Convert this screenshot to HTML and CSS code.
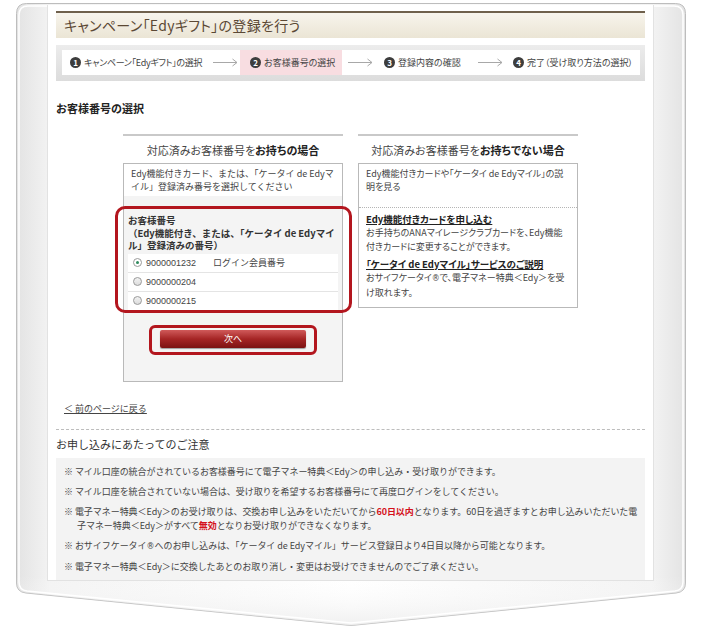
FILE: index.html
```html
<!DOCTYPE html>
<html lang="ja">
  <head>
    <meta charset="UTF-8" />
    <meta name="viewport" content="width=device-width, initial-scale=1.0" />
    <title>キャンペーン「Edyギフト」の登録を行う</title>
    <link rel="stylesheet" href="styles.css">
  </head>
  <body>
    <div class="frame">
      <!-- 外枠（下の矢印型） -->
      <svg class="frame-bg" width="670" height="624" viewBox="0 0 670 624">
        <defs>
          <linearGradient id="side" x1="0" y1="0" x2="1" y2="0">
            <stop offset="0" stop-color="#e3e3e3" />
            <stop offset="0.05" stop-color="#f3f3f3" />
            <stop offset="0.5" stop-color="#ffffff" />
            <stop offset="0.95" stop-color="#f3f3f3" />
            <stop offset="1" stop-color="#e3e3e3" />
          </linearGradient>
          <linearGradient id="tip" x1="0" y1="0" x2="0" y2="1">
            <stop offset="0" stop-color="#ffffff" stop-opacity="0" />
            <stop offset="0.92" stop-color="#ffffff" stop-opacity="0" />
            <stop offset="1" stop-color="#e9e9e9" stop-opacity="0.7" />
          </linearGradient>
        </defs>
        <path d="M10.5 0.5 H659.5 Q669.5 0.5 669.5 10.5 V580 Q669.5 589 660 590 L335 622.5 L10 590 Q0.5 589 0.5 580 V10.5 Q0.5 0.5 10.5 0.5 Z"
              fill="url(#side)" stroke="#bdbdbd" />
        <path d="M10.5 0.5 H659.5 Q669.5 0.5 669.5 10.5 V580 Q669.5 589 660 590 L335 622.5 L10 590 Q0.5 589 0.5 580 V10.5 Q0.5 0.5 10.5 0.5 Z"
              fill="url(#tip)" stroke="none" />
        <path d="M12 3 H658 Q667 3 667 12 V579 Q667 587 659 588 L335 620 L11 588 Q3 587 3 579 V12 Q3 3 12 3 Z"
              fill="none" stroke="#ffffff" stroke-width="1.5" />
      </svg>

      <div class="panel">
        <h1 class="page-title">キャンペーン「Edyギフト」の登録を行う</h1>

        <!-- ステップ表示 -->
        <div class="steps">
          <div class="steps-inner">
            <div class="step step-1"><span class="num">1</span>キャンペーン「Edyギフト」の選択</div>
            <svg class="arrow" width="25" height="9" viewBox="0 0 25 9"><path d="M0 4.5 H24 M19.5 1 L24 4.5 L19.5 8" fill="none" stroke="#a8a8a8" /></svg>
            <div class="step step-2 current"><span class="num">2</span>お客様番号の選択</div>
            <svg class="arrow arrow-2" width="25" height="9" viewBox="0 0 25 9"><path d="M0 4.5 H24 M19.5 1 L24 4.5 L19.5 8" fill="none" stroke="#a8a8a8" /></svg>
            <div class="step step-3"><span class="num">3</span>登録内容の確認</div>
            <svg class="arrow" width="25" height="9" viewBox="0 0 25 9"><path d="M0 4.5 H24 M19.5 1 L24 4.5 L19.5 8" fill="none" stroke="#a8a8a8" /></svg>
            <div class="step step-4"><span class="num">4</span>完了（受け取り方法の選択）</div>
          </div>
        </div>

        <h2 class="section-title">お客様番号の選択</h2>

        <div class="columns">
          <!-- お持ちの場合 -->
          <div class="column">
            <h3 class="column-title">対応済みお客様番号を<strong>お持ちの場合</strong></h3>
            <div class="box box-select">
              <p class="box-lead">Edy機能付きカード、または、「ケータイ de Edyマイル」登録済み番号を選択してください</p>
              <div class="box-body">
                <div class="highlight">
                  <p class="select-label">お客様番号<br>（Edy機能付き、または、「ケータイ de Edyマイル」登録済みの番号）</p>
                  <ul class="number-list">
                    <li><span class="radio checked"></span>9000001232<span class="note">ログイン会員番号</span></li>
                    <li><span class="radio"></span>9000000204</li>
                    <li><span class="radio"></span>9000000215</li>
                  </ul>
                </div>
                <div class="next-wrap">
                  <button class="next-btn">次へ</button>
                </div>
              </div>
            </div>
          </div>

          <!-- お持ちでない場合 -->
          <div class="column">
            <h3 class="column-title">対応済みお客様番号を<strong>お持ちでない場合</strong></h3>
            <div class="box box-info">
              <p class="box-lead">Edy機能付きカードや「ケータイ de Edyマイル」の説明を見る</p>
              <div class="box-links">
                <a href="#" class="box-link">Edy機能付きカードを申し込む</a>
                <p>お手持ちのANAマイレージクラブカードを、Edy機能付きカードに変更することができます。</p>
                <a href="#" class="box-link">「ケータイ de Edyマイル」サービスのご説明</a>
                <p><span>おサイフケータイ</span><span class="reg">®</span><span>で、電子マネー特典＜Edy＞を受</span><br><span>け取れます。</span></p>
              </div>
            </div>
          </div>
        </div>

        <a href="#" class="back-link">＜ 前のページに戻る</a>

        <h2 class="notes-title">お申し込みにあたってのご注意</h2>
        <ul class="notes">
          <li>※ マイル口座の統合がされているお客様番号にて電子マネー特典＜Edy＞の申し込み・受け取りができます。</li>
          <li>※ マイル口座を統合されていない場合は、受け取りを希望するお客様番号にて再度ログインをしてください。</li>
          <li><span>※ 電子マネー特典＜Edy＞のお受け取りは、交換お申し込みをいただいてから</span><em>60日以内</em><span>となります。60日を過ぎますとお申し込みいただいた電</span><br><span>子マネー特典＜Edy＞がすべて</span><em>無効</em><span>となりお受け取りができなくなります。</span></li>
          <li>※ おサイフケータイ<span class="reg">®</span>へのお申し込みは、「ケータイ de Edyマイル」サービス登録日より4日目以降から可能となります。</li>
          <li>※ 電子マネー特典＜Edy＞に交換したあとのお取り消し・変更はお受けできませんのでご了承ください。</li>
        </ul>
      </div>
    </div>
  </body>
</html>
```

FILE: styles.css
```css
/* ページ全体 */
body {
  margin: 0;
  background-color: #fff;
  color: #333;
  font-family: "Noto Sans CJK JP", "Noto Sans", sans-serif;
}

h1, h2, h3, p, ul {
  margin: 0;
  padding: 0;
  font-weight: normal;
}

ul {
  list-style: none;
}

/* 外枠 */
.frame {
  position: relative;
  isolation: isolate;
  width: 670px;
  height: 624px;
  margin: 3px 0 0 16px;
  padding: 2px 32px 0 31px;
  box-sizing: border-box;
}

.frame-bg {
  position: absolute;
  left: 0;
  top: 0;
  z-index: -1;
}

/* 白いパネル */
.panel {
  display: flex;
  flex-direction: column;
  width: 607px;
  height: 576px;
  padding: 0 8px;
  box-sizing: border-box;
  background-color: #fff;
  border: 1px solid #e2e2e2;
  border-top: none;
}

/* タイトル */
.page-title {
  margin-top: 6px;
  height: 25px;
  padding-left: 8px;
  border-top: 2px solid #6f604c;
  background: linear-gradient(#f7f4ec, #ebe5d5);
  color: #5b4834;
  font-size: 14px;
  line-height: 25px;
  font-feature-settings: "palt";
  letter-spacing: 0.3px;
}

/* ステップ */
.steps {
  margin-top: 7px;
  padding: 5px 5px 6px 6px;
  background: linear-gradient(#ececec, #dcdcdc);
}

.steps-inner {
  display: flex;
  align-items: center;
  height: 25px;
  background-color: #fff;
}

.step {
  display: flex;
  align-items: center;
  height: 100%;
  box-sizing: border-box;
  font-size: 9px;
  color: #444;
  white-space: nowrap;
  font-feature-settings: "palt";
}

.step .num {
  display: inline-flex;
  justify-content: center;
  align-items: center;
  width: 11px;
  height: 11px;
  margin-right: 3px;
  border-radius: 50%;
  background-color: #3d3d3d;
  color: #fff;
  font-size: 8px;
  font-weight: bold;
  line-height: 1;
}

.step-1 {
  width: 151px;
  padding-left: 8px;
  letter-spacing: -0.3px;
}

.step-2 {
  width: 102px;
  margin-left: 2px;
  padding-left: 10px;
}

.step-3 {
  width: 105px;
  padding-left: 11px;
}

.step-4 {
  padding-left: 10px;
}

.current {
  background-color: #f8dde1;
}

.arrow {
  flex-shrink: 0;
}

.arrow-2 {
  margin-left: 6px;
}

/* 見出し */
.section-title {
  margin-top: 20px;
  font-size: 11px;
  font-weight: bold;
  line-height: 14px;
  color: #222;
}

/* 2カラム */
.columns {
  display: flex;
  justify-content: center;
  align-items: flex-start;
  gap: 15px;
  margin-top: 19px;
}

.column {
  width: 220px;
  border-top: 2px solid #c9c9c9;
}

.column-title {
  margin-top: 7px;
  font-size: 11px;
  line-height: 14px;
  text-align: center;
  color: #444;
  font-feature-settings: "palt";
}

.column-title strong {
  color: #222;
}

.box {
  margin-top: 6px;
  border: 1px solid #b9b9b9;
  background-color: #fff;
}

.box-info {
  font-feature-settings: "palt";
}

.box-lead {
  padding: 3px 7px;
  font-size: 9px;
  line-height: 13px;
  color: #444;
}

.box-body {
  padding: 10px 0 26px;
  background-color: #f4f4f4;
}

/* 赤枠 */
.highlight {
  margin: 0 -10px 0 -9px;
  padding: 5px 11px 0 10px;
  border: 3px solid #b3161e;
  border-radius: 10px;
}

.select-label {
  font-size: 9.5px;
  font-weight: bold;
  line-height: 12.5px;
  color: #333;
}

.number-list {
  margin-top: 2px;
  background-color: #fff;
}

.number-list li {
  display: flex;
  align-items: center;
  height: 18px;
  padding-left: 5px;
  border-bottom: 1px solid #e4e4e4;
  font-family: "Liberation Sans", sans-serif;
  font-size: 9px;
  color: #444;
}

.number-list li:last-child {
  border-bottom: none;
}

.radio {
  width: 7px;
  height: 7px;
  margin-right: 4px;
  border: 1px solid #9a9a9a;
  border-radius: 50%;
  background: linear-gradient(#f2f2f2, #dcdcdc);
}

.radio.checked {
  position: relative;
  background: #fff;
}

.radio.checked::after {
  content: "";
  position: absolute;
  left: 2px;
  top: 2px;
  width: 3px;
  height: 3px;
  border-radius: 50%;
  background-color: #2f8a5e;
}

.number-list .note {
  margin-left: 17px;
  font-family: "Noto Sans CJK JP", sans-serif;
}

/* 次へボタン */
.next-wrap {
  width: fit-content;
  margin: 12px auto 0;
  padding: 2px 8px 4px;
  border: 3px solid #b3161e;
  border-radius: 6px;
}

.next-btn {
  display: block;
  width: 146px;
  height: 18px;
  padding: 0;
  border: none;
  border-radius: 2px;
  background: linear-gradient(#d05a5a, #a52525 50%, #7c1212);
  box-shadow: 0 1px 1px rgba(0, 0, 0, 0.35);
  color: #fff;
  font-family: "Noto Sans CJK JP", sans-serif;
  font-size: 9px;
  cursor: pointer;
}

/* 右ボックスのリンク */
.box-links {
  margin-top: 11px;
  padding: 5px 7px 8px;
  border-top: 1px dotted #b5b5b5;
  font-size: 9px;
  color: #444;
}

.box-links p {
  line-height: 13.5px;
}

.box-link {
  display: block;
  margin-top: 5px;
  font-size: 9.5px;
  font-weight: bold;
  line-height: 13px;
  color: #222;
}

.box-link:first-child {
  margin-top: 0;
}

.reg {
  font-family: "DejaVu Sans", sans-serif;
  font-size: 8px;
}

/* 戻るリンク */
.back-link {
  align-self: flex-start;
  margin: 20px 0 0 8px;
  font-size: 9px;
  line-height: 13px;
  color: #444;
}

/* 注意事項 */
.notes-title {
  margin-top: 14px;
  padding-top: 7px;
  border-top: 1px dashed #bdbdbd;
  font-size: 11px;
  line-height: 14px;
  color: #333;
}

.notes {
  flex: 1;
  margin-top: 7px;
  padding: 7px 0 0 8px;
  background-color: #f3f3f3;
}

.notes li {
  margin-bottom: 6px;
  padding-left: 13px;
  text-indent: -13px;
  font-size: 9px;
  line-height: 14px;
  letter-spacing: -0.05px;
  color: #444;
}

.notes em {
  font-style: normal;
  font-weight: bold;
  color: #d4111b;
}
```
